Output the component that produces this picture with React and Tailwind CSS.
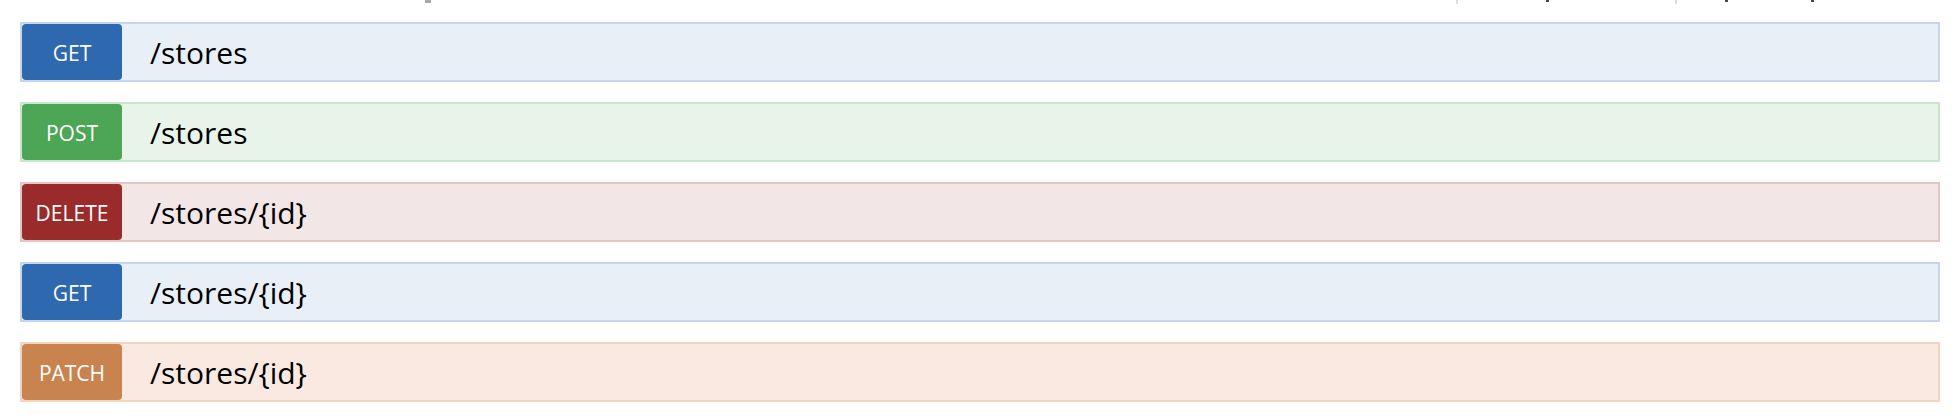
const ENDPOINTS = [
  {
    method: "GET",
    path: "/stores",
    row: "bg-[#e8eff7] border-[#c6d7ea]",
    badge: "bg-[#2e69b0]",
  },
  {
    method: "POST",
    path: "/stores",
    row: "bg-[#e8f4ea] border-[#c8e6cd]",
    badge: "bg-[#4ca656]",
  },
  {
    method: "DELETE",
    path: "/stores/{id}",
    row: "bg-[#f2e6e6] border-[#e4c6c8]",
    badge: "bg-[#992b2b]",
  },
  {
    method: "GET",
    path: "/stores/{id}",
    row: "bg-[#e8eff7] border-[#c6d7ea]",
    badge: "bg-[#2e69b0]",
  },
  {
    method: "PATCH",
    path: "/stores/{id}",
    row: "bg-[#f9e9e1] border-[#f0d3c0]",
    badge: "bg-[#c8834f]",
  },
];

function CutOffMarks() {
  // leftovers of the section above, clipped by the viewport
  return (
    <div className="flex h-[22px] items-start">
      <div className="ml-[425px] h-[3px] w-[6px] bg-[#a8a8a8]" />
      <div className="ml-[1025px] h-[4px] w-[2px] bg-[#dcdcdc]" />
      <div className="ml-[88px] h-[2px] w-[3px] bg-[#4a4a4a]" />
      <div className="ml-[126px] h-[4px] w-[2px] bg-[#dcdcdc]" />
      <div className="ml-[48px] h-[2px] w-[3px] bg-[#4a4a4a]" />
      <div className="ml-[83px] h-[2px] w-[3px] bg-[#4a4a4a]" />
    </div>
  );
}

function EndpointRow({ method, path, row, badge }) {
  return (
    <div className={`flex h-[60px] items-stretch border-2 ${row}`}>
      <div
        className={`flex w-[100px] shrink-0 items-center justify-center rounded-[4px] pt-[4px] text-[21px] text-white ${badge}`}
      >
        {method}
      </div>
      <div className="flex items-center pl-[28px] text-[30px] text-black">{path}</div>
    </div>
  );
}

export default function App() {
  return (
    <div
      className="h-[420px] w-[1960px] overflow-hidden bg-white"
      style={{ fontFamily: '"Open Sans", "Noto Sans", sans-serif' }}
    >
      <CutOffMarks />
      <div className="flex flex-col gap-[20px] px-[20px]">
        {ENDPOINTS.map((endpoint, index) => (
          <EndpointRow key={index} {...endpoint} />
        ))}
      </div>
    </div>
  );
}
